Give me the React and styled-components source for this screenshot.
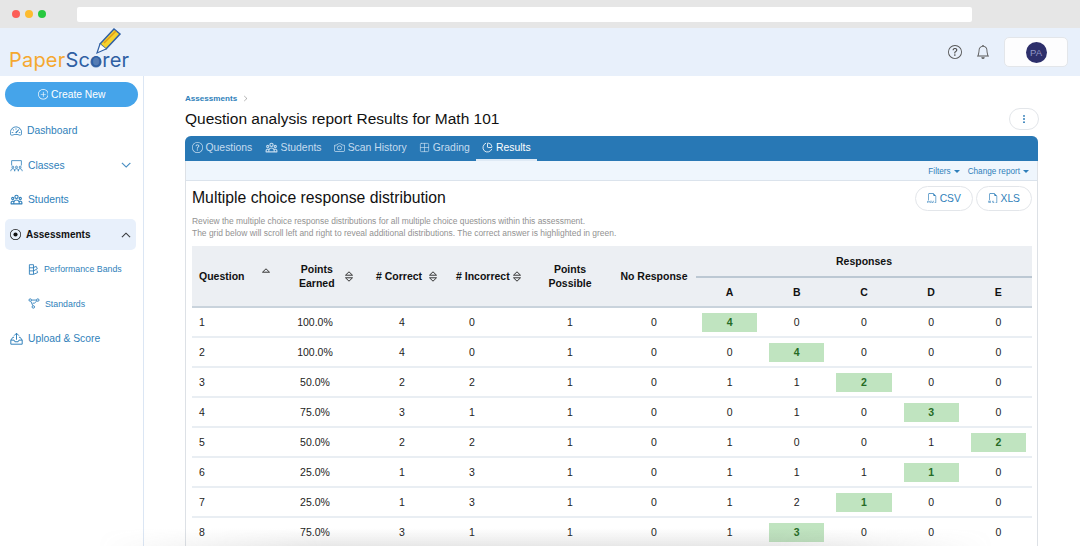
import React from 'react';
import styled, { createGlobalStyle } from 'styled-components';
import {
  BsBell,
  BsCamera,
  BsChevronDown,
  BsChevronRight,
  BsChevronUp,
  BsFiletypeCsv,
  BsFiletypeXls,
  BsPlusCircle,
  BsQuestionCircle,
  BsRecordCircle,
  BsSpeedometer2,
  BsThreeDotsVertical,
} from 'react-icons/bs';
import { HiOutlineUserGroup } from 'react-icons/hi';
import { ChartPie, Grid2x2 } from 'lucide-react';

const GlobalStyle = createGlobalStyle`
  html, body {
    margin: 0;
    padding: 0;
    background: #fff;
    font-family: "Liberation Sans", Arial, sans-serif;
  }
  * { box-sizing: border-box; }
`;

const Page = styled.div`
  position: relative;
  width: 1080px;
  height: 546px;
  overflow: hidden;
  background: #fff;
`;

const BrowserBar = styled.div`
  height: 28px;
  background: #e6e6e6;
  display: flex;
  align-items: center;
  padding: 0 12px;
`;

const Dots = styled.div`
  display: flex;
  gap: 5px;
  width: 65px;
`;

const Dot = styled.span`
  width: 8px;
  height: 8px;
  border-radius: 50%;
  background: ${(p) => p.$color};
`;

const AddressBar = styled.div`
  width: 895px;
  height: 15px;
  background: #fff;
  border-radius: 2px;
`;

const Header = styled.header`
  height: 48px;
  background: #e8f0fb;
  display: flex;
  align-items: center;
  justify-content: space-between;
  padding: 0 12px 0 9px;
`;

const Logo = styled.div`
  position: relative;
  display: flex;
  align-items: baseline;
  font-family: Inter, sans-serif;
  font-size: 20px;
  font-weight: 400;
  letter-spacing: 0.2px;
  line-height: 1;
  margin-top: 16px;
`;

const LogoPart = styled.span`
  color: ${(p) => p.$color};
`;

const LogoPencil = styled.svg`
  position: absolute;
  left: 78px;
  top: -27px;
`;

const HeaderTools = styled.div`
  display: flex;
  align-items: center;
  color: #555;
`;

const ToolIcon = styled.span`
  display: flex;
  font-size: 14px;
  margin-right: 14px;
`;

const UserBox = styled.div`
  width: 64px;
  height: 30px;
  background: #fdfdfe;
  border: 1px solid #e3e6ea;
  border-radius: 5px;
  display: flex;
  align-items: center;
  justify-content: center;
`;

const Avatar = styled.div`
  width: 21px;
  height: 21px;
  border-radius: 50%;
  background: #2d2f6b;
  color: #9297c6;
  font-size: 9.5px;
  display: flex;
  align-items: center;
  justify-content: center;
`;

const Body = styled.div`
  display: flex;
  height: 470px;
`;

const Sidebar = styled.aside`
  width: 144px;
  flex: none;
  border-right: 1px solid #dbe6f4;
  padding: 6px 5px 0;
`;

const CreateButton = styled.div`
  height: 25px;
  margin-bottom: 8px;
  border-radius: 13px;
  background: #45a4ea;
  color: #fff;
  font-size: 10.3px;
  display: flex;
  align-items: center;
  justify-content: center;
  gap: 3px;
  svg { font-size: 10.5px; }
`;

const NavItem = styled.div`
  height: 31px;
  margin: 0 2px 3.7px 0;
  border-radius: 5px;
  display: flex;
  align-items: center;
  gap: 5px;
  padding: 0 5px 0 ${(p) => (p.$sub ? '23px' : '5px')};
  font-size: ${(p) => (p.$sub ? '8.8px' : p.$active ? '10px' : '10.3px')};
  font-weight: ${(p) => (p.$active ? 700 : 400)};
  color: ${(p) => (p.$active ? '#111' : '#2f7fba')};
  background: ${(p) => (p.$active ? '#e8f0fb' : 'transparent')};
  > svg { stroke-width: 0.6; stroke: currentColor; }
`;

const NavLabel = styled.span`
  flex: 1;
`;

const NavIcon = styled.span`
  display: flex;
  font-size: ${(p) => (p.$sub ? '11px' : '12px')};
`;

const Main = styled.main`
  flex: 1;
  min-width: 0;
  padding: 16px 42px 0 41px;
`;

const Crumbs = styled.div`
  height: 12px;
  display: flex;
  align-items: center;
  gap: 5px;
  font-size: 8.1px;
  font-weight: 700;
  color: #2f7fba;
  svg { color: #888; font-size: 7px; }
`;

const TitleRow = styled.div`
  height: 32px;
  display: flex;
  align-items: center;
  justify-content: space-between;
`;

const PageTitle = styled.h1`
  margin: 0 0 2px;
  font-size: 15.5px;
  font-weight: 400;
  color: #111;
`;

const KebabButton = styled.div`
  width: 30px;
  height: 22px;
  margin: 0 -1px 2px 0;
  border: 1px solid #e3e6ea;
  border-radius: 11px;
  display: flex;
  align-items: center;
  justify-content: center;
  font-size: 10px;
  color: #2878b5;
`;

const Card = styled.section`
  border: 1px solid #dde1e6;
  border-bottom: 0;
  border-radius: 6px 6px 0 0;
  height: 420px;
`;

const Tabs = styled.nav`
  height: 25px;
  margin: -1px -1px 0;
  padding-left: 7px;
  background: #2878b5;
  border-radius: 6px 6px 0 0;
  display: flex;
  gap: 12.7px;
`;

const Tab = styled.div`
  height: 25px;
  display: flex;
  align-items: center;
  gap: 2.5px;
  padding: 0 ${(p) => (p.$active ? '6px' : '0')};
  margin: 0 ${(p) => (p.$active ? '-6px' : '0')};
  font-size: 10.4px;
  color: ${(p) => (p.$active ? '#fff' : '#c5dcef')};
  border-bottom: 2px solid ${(p) => (p.$active ? '#dfeaf5' : 'transparent')};
  svg { font-size: 11px; flex: none; }
`;

const SubBar = styled.div`
  height: 20px;
  padding: 1px 8px 0 0;
  background: #eff6fd;
  border-bottom: 1px solid #dbe3ec;
  display: flex;
  align-items: center;
  justify-content: flex-end;
  gap: 8px;
  font-size: 8.2px;
  color: #2f7fba;
`;

const Caret = styled.span`
  display: inline-block;
  margin-left: 3px;
  vertical-align: 1px;
  border: 3px solid transparent;
  border-top-color: #2f7fba;
  border-bottom: 0;
`;

const CardBody = styled.div`
  padding: 0 5px 0 6px;
`;

const SectionTop = styled.div`
  display: flex;
  justify-content: space-between;
  height: 34px;
  align-items: center;
`;

const SectionTitle = styled.h2`
  margin: 0;
  font-size: 15.75px;
  font-weight: 400;
  color: #111;
`;

const FileButtons = styled.div`
  display: flex;
  gap: 3px;
`;

const FileButton = styled.div`
  width: ${(p) => p.$width}px;
  height: 25px;
  border: 1px solid #e3e6ea;
  border-radius: 13px;
  display: flex;
  align-items: center;
  justify-content: center;
  gap: 2px;
  font-size: 10.3px;
  color: #2f7fba;
  svg { font-size: 10.5px; }
`;

const Intro = styled.p`
  margin: 0 0 7px;
  font-size: 8.45px;
  line-height: 12px;
  color: #929292;
`;

const Grid = styled.table`
  width: 840px;
  table-layout: fixed;
  border-collapse: collapse;
  font-size: 10.5px;
  color: #222;
`;

const HeadCell = styled.th`
  height: ${(p) => (p.$tall ? '61px' : '30px')};
  padding: 0;
  background: #eceff3;
  font-size: 10.5px;
  font-weight: 700;
  color: #111;
  text-align: center;
  line-height: 14px;
  border-bottom: 2px solid ${(p) => (p.$group ? '#bcc8d3' : '#c9d3dc')};
`;

const HeadInner = styled.div`
  display: flex;
  align-items: center;
  gap: ${(p) => p.$gap || 0}px;
  padding-left: ${(p) => p.$indent || 0}px;
`;

const SortMark = styled.svg`
  flex: none;
  margin-top: ${(p) => (p.$single ? '-6px' : '0')};
`;

const Row = styled.tr`
  height: 30px;
  border-bottom: 2px solid #e9eef3;
`;

const Cell = styled.td`
  padding: 0 ${(p) => p.$shift || 0}px 0 ${(p) => p.$left || 0}px;
  text-align: ${(p) => (p.$left ? 'left' : 'center')};
`;

const AnswerCell = styled.td`
  padding: 0 6px;
  text-align: center;
`;

const Answer = styled.div`
  height: 19px;
  line-height: 19px;
  background: ${(p) => (p.$correct ? '#c0e4c0' : 'transparent')};
  color: ${(p) => (p.$correct ? '#256b25' : 'inherit')};
  font-weight: ${(p) => (p.$correct ? 700 : 400)};
`;

const BottomFade = styled.div`
  position: absolute;
  left: 0;
  right: 0;
  bottom: 0;
  height: 18px;
  pointer-events: none;
  background: linear-gradient(to bottom, rgba(110, 110, 110, 0), rgba(110, 110, 110, 0.16));
  mask-image: linear-gradient(to right, transparent 9%, #000 30%, #000 72%, transparent 92%);
`;

const ClassesIcon = () => (
  <svg width="13" height="13" viewBox="0 0 16 16" fill="none" stroke="currentColor" strokeWidth="1">
    <path d="M2 8V2h12v6" />
    <circle cx="3.5" cy="10" r="1.2" />
    <circle cx="8" cy="10" r="1.2" />
    <circle cx="12.5" cy="10" r="1.2" />
    <path d="M1 15c0-2 1-3 2.500-3S6 13 6 15M5.500 15c0-2 1-3 2.500-3s2.500 1 2.500 3M10 15c0-2 1-3 2.500-3s2.500 1 2.500 3" />
  </svg>
);

const BandsIcon = () => (
  <svg width="11" height="11" viewBox="0 0 16 16" fill="none" stroke="currentColor" strokeWidth="1.300">
    <path d="M2 1h6v14H2zM2 5.500h6M2 10h6" />
    <path d="M8 5l4-1.500 1.500 3.500L8 10" />
    <path d="M8 15l6-2.500-1-3" />
  </svg>
);

const StandardsIcon = () => (
  <svg width="12" height="11" viewBox="0 0 16 16" fill="none" stroke="currentColor" strokeWidth="1.300">
    <circle cx="2.500" cy="3" r="1.800" />
    <circle cx="13.500" cy="3" r="1.800" />
    <circle cx="7" cy="13" r="1.800" />
    <path d="M4.500 3h7M3.500 5l2.800 6.200M12 4.500 8.500 7.500H6" />
  </svg>
);

const UploadIcon = () => (
  <svg width="13" height="13" viewBox="0 0 16 16" fill="none" stroke="currentColor" strokeWidth="1.200">
    <path d="M1 10v5h14v-5l-2.500-3.500H11M1 10l2.500-3.500H5M1 10h4l1 2h4l1-2h4" />
    <path d="M8 9.500V1.500M5 4.500l3-3 3 3" />
  </svg>
);

const SortIcon = ({ down = true }) => (
  <SortMark $single={!down} width="8" height="11" viewBox="0 0 8 11" fill="none" stroke="#333" strokeWidth="1">
    <path d="M0.500 4.200 4 0.800l3.500 3.400z" />
    {down && <path d="M0.500 6.800 4 10.200l3.500-3.400z" />}
  </SortMark>
);

const navItems = [
  { label: 'Dashboard', icon: <BsSpeedometer2 /> },
  { label: 'Classes', icon: <ClassesIcon />, chevron: <BsChevronDown /> },
  { label: 'Students', icon: <HiOutlineUserGroup size={13} /> },
  { label: 'Assessments', icon: <BsRecordCircle size={11} />, chevron: <BsChevronUp />, active: true },
  { label: 'Performance Bands', icon: <BandsIcon />, sub: true },
  { label: 'Standards', icon: <StandardsIcon />, sub: true },
  { label: 'Upload & Score', icon: <UploadIcon /> },
];

const tabs = [
  { label: 'Questions', icon: <BsQuestionCircle /> },
  { label: 'Students', icon: <HiOutlineUserGroup size={13} /> },
  { label: 'Scan History', icon: <BsCamera /> },
  { label: 'Grading', icon: <Grid2x2 size={11} strokeWidth={1.500} /> },
  { label: 'Results', icon: <ChartPie size={11} strokeWidth={1.800} />, active: true },
];

// question, percent, correct, incorrect, responses, index of the right answer
const rows = [
  [1, '100.0%', 4, 0, [4, 0, 0, 0, 0], 0],
  [2, '100.0%', 4, 0, [0, 4, 0, 0, 0], 1],
  [3, '50.0%', 2, 2, [1, 1, 2, 0, 0], 2],
  [4, '75.0%', 3, 1, [0, 1, 0, 3, 0], 3],
  [5, '50.0%', 2, 2, [1, 0, 0, 1, 2], 4],
  [6, '25.0%', 1, 3, [1, 1, 1, 1, 0], 3],
  [7, '25.0%', 1, 3, [1, 2, 1, 0, 0], 2],
  [8, '75.0%', 3, 1, [1, 3, 0, 0, 0], 1],
];

const widths = [76, 94, 80, 86, 84, 84, 67.2, 67.2, 67.2, 67.2, 67.2];

const App = () => (
  <Page>
    <GlobalStyle />
    <BrowserBar>
      <Dots>
        <Dot $color="#fc5d57" />
        <Dot $color="#fdbb2e" />
        <Dot $color="#27c83f" />
      </Dots>
      <AddressBar />
    </BrowserBar>
    <Header>
      <Logo>
        <LogoPart $color="#f5a82f">Paper</LogoPart>
        <LogoPart $color="#2f5fa3">Scorer</LogoPart>
        <LogoPencil width="36" height="46" viewBox="0 0 36 46">
          <circle cx="9" cy="39" r="5.500" fill="#2f5fa3" opacity="0.8" />
          <path d="M13 21 27 6l6 5-14 15z" fill="#f6d32d" stroke="#2f5fa3" strokeWidth="1.500" />
          <path d="M17 20 29 8" stroke="#e09a1a" strokeWidth="1.500" />
          <path d="M13 21l-3 9 9-4" fill="#fff" stroke="#2f5fa3" strokeWidth="1.200" />
        </LogoPencil>
      </Logo>
      <HeaderTools>
        <ToolIcon><BsQuestionCircle /></ToolIcon>
        <ToolIcon><BsBell /></ToolIcon>
        <UserBox><Avatar>PA</Avatar></UserBox>
      </HeaderTools>
    </Header>
    <Body>
      <Sidebar>
        <CreateButton><BsPlusCircle />Create New</CreateButton>
        {navItems.map((item) => (
          <NavItem key={item.label} $active={item.active} $sub={item.sub}>
            <NavIcon $sub={item.sub}>{item.icon}</NavIcon>
            <NavLabel>{item.label}</NavLabel>
            {item.chevron}
          </NavItem>
        ))}
      </Sidebar>
      <Main>
        <Crumbs>Assessments <BsChevronRight /></Crumbs>
        <TitleRow>
          <PageTitle>Question analysis report Results for Math 101</PageTitle>
          <KebabButton><BsThreeDotsVertical /></KebabButton>
        </TitleRow>
        <Card>
          <Tabs>
            {tabs.map((tab) => (
              <Tab key={tab.label} $active={tab.active}>{tab.icon}{tab.label}</Tab>
            ))}
          </Tabs>
          <SubBar>
            <span>Filters<Caret /></span>
            <span>Change report<Caret /></span>
          </SubBar>
          <CardBody>
            <SectionTop>
              <SectionTitle>Multiple choice response distribution</SectionTitle>
              <FileButtons>
                <FileButton $width={58}><BsFiletypeCsv />CSV</FileButton>
                <FileButton $width={56}><BsFiletypeXls />XLS</FileButton>
              </FileButtons>
            </SectionTop>
            <Intro>
              Review the multiple choice response distributions for all multiple choice questions within this assessment.<br />
              The grid below will scroll left and right to reveal additional distributions. The correct answer is highlighted in green.
            </Intro>
            <Grid>
              <colgroup>
                {widths.map((w, i) => <col key={i} style={{ width: w }} />)}
              </colgroup>
              <thead>
                <tr>
                  <HeadCell rowSpan={2} $tall>
                    <HeadInner $indent={7} $gap={17}>Question<SortIcon down={false} /></HeadInner>
                  </HeadCell>
                  <HeadCell rowSpan={2} $tall>
                    <HeadInner $indent={31} $gap={10}><span>Points<br />Earned</span><SortIcon /></HeadInner>
                  </HeadCell>
                  <HeadCell rowSpan={2} $tall>
                    <HeadInner $indent={14} $gap={7}># Correct<SortIcon /></HeadInner>
                  </HeadCell>
                  <HeadCell rowSpan={2} $tall>
                    <HeadInner $indent={14} $gap={3}># Incorrect<SortIcon /></HeadInner>
                  </HeadCell>
                  <HeadCell rowSpan={2} $tall>Points<br />Possible</HeadCell>
                  <HeadCell rowSpan={2} $tall>No Response</HeadCell>
                  <HeadCell colSpan={5} $group>Responses</HeadCell>
                </tr>
                <tr>
                  {['A', 'B', 'C', 'D', 'E'].map((l) => <HeadCell key={l}>{l}</HeadCell>)}
                </tr>
              </thead>
              <tbody>
                {rows.map(([q, pct, right, wrong, answers, key]) => (
                  <Row key={q}>
                    <Cell $left={7}>{q}</Cell>
                    <Cell>{pct}</Cell>
                    <Cell>{right}</Cell>
                    <Cell $shift={26}>{wrong}</Cell>
                    <Cell>1</Cell>
                    <Cell>0</Cell>
                    {answers.map((a, i) => (
                      <AnswerCell key={i}><Answer $correct={i === key}>{a}</Answer></AnswerCell>
                    ))}
                  </Row>
                ))}
              </tbody>
            </Grid>
          </CardBody>
        </Card>
      </Main>
    </Body>
    <BottomFade />
  </Page>
);

export default App;
